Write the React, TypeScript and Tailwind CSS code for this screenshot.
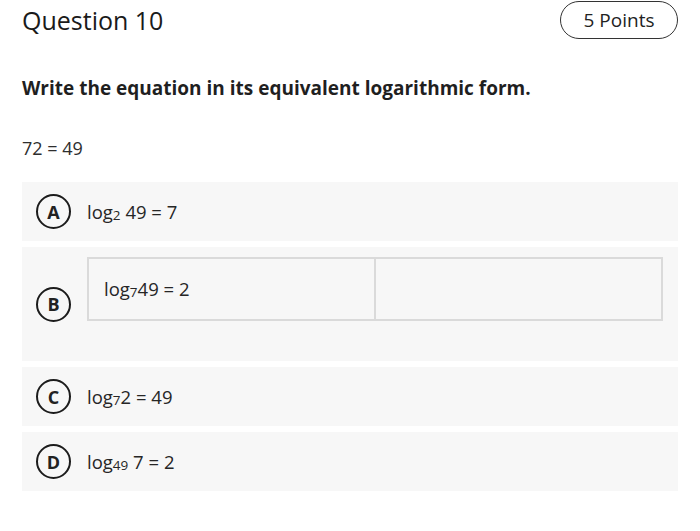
const font = { fontFamily: '"Open Sans", "Liberation Sans", sans-serif' };

function Letter({ ch }: { ch: string }) {
  return (
    <div className="flex h-[35px] w-[35px] shrink-0 items-center justify-center rounded-full border-2 border-[#1c1c1c] text-[18px] font-bold leading-none text-[#222]">
      {ch}
    </div>
  );
}

function Log({ base, rest }: { base: string; rest: string }) {
  return (
    <span className="text-[18.5px] text-[#262626]">
      log
      <sub className="relative top-[1px] text-[13.5px]">{base}</sub>
      {rest}
    </span>
  );
}

export default function App() {
  return (
    <div className="min-h-[531px] w-[700px] bg-white px-[22px] text-[#222]" style={font}>
      {/* header */}
      <div className="flex items-center justify-between pt-[1px]">
        <h1 className="text-[25px] leading-[38px] text-[#1a1a1a]">Question 10</h1>
        <div className="flex h-[38px] w-[118px] items-center justify-center rounded-full border-[1.5px] border-[#333] text-[19px] text-[#222]">
          5 Points
        </div>
      </div>

      <p className="mt-[37px] text-[19px] font-bold leading-[24px] text-[#1f1f1f]">
        Write the equation in its equivalent logarithmic form.
      </p>

      <p className="mt-[36px] text-[18px] leading-[24px] text-[#2e2e2e]">72 = 49</p>

      <div className="mt-[22px] flex flex-col gap-[6px]">
        <div className="flex h-[59px] items-center gap-[16px] bg-[#f7f7f7] pl-[14px]">
          <Letter ch="A" />
          <Log base="2" rest=" 49 = 7" />
        </div>

        <div className="flex h-[114px] items-center gap-[16px] bg-[#f7f7f7] pl-[14px] pr-[15px]">
          <Letter ch="B" />
          <div className="flex flex-1 flex-col self-start pt-[10px]">
            <div className="flex h-[64px] border-2 border-[#dadada]">
              <div className="flex w-[287px] items-center border-r-2 border-[#dadada] pl-[15px]">
                <Log base="7" rest="49 = 2" />
              </div>
              <div className="flex-1" />
            </div>
          </div>
        </div>

        <div className="flex h-[59px] items-center gap-[16px] bg-[#f7f7f7] pl-[14px]">
          <Letter ch="C" />
          <Log base="7" rest="2 = 49" />
        </div>

        <div className="flex h-[59px] items-center gap-[16px] bg-[#f7f7f7] pl-[14px]">
          <Letter ch="D" />
          <Log base="49" rest=" 7 = 2" />
        </div>
      </div>
    </div>
  );
}
